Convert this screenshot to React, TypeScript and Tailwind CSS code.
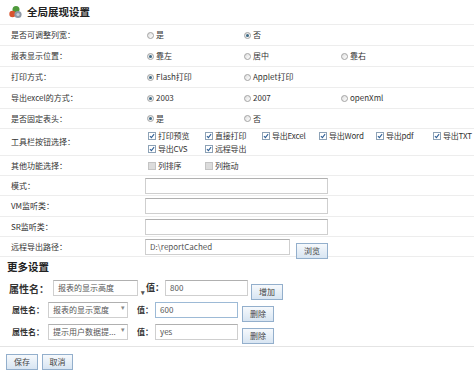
import React from "react";

const Radio = ({ checked }: { checked?: boolean }) => (
  <span className="relative inline-block w-[7px] h-[7px] shrink-0 rounded-full border border-[#a3a3a3] bg-linear-to-br from-[#dedede] to-white">
    {checked && <span className="absolute inset-[1px] rounded-full bg-[#3d6a86]" />}
  </span>
);

const Check = ({ checked }: { checked?: boolean }) => (
  <span
    className={
      "inline-flex items-center justify-center w-[8px] h-[8px] shrink-0 border " +
      (checked ? "border-[#8da2b6] bg-white" : "border-[#c4c4c4] bg-[#dcdcdc]")
    }
  >
    {checked && (
      <svg viewBox="0 0 8 8" className="w-[6px] h-[6px]">
        <path d="M1.2 4.2 L3.2 6.2 L6.8 1.5" stroke="#2f5f96" strokeWidth="1.4" fill="none" />
      </svg>
    )}
  </span>
);

const Btn = ({ children, w = "w-[32px]" }: { children: React.ReactNode; w?: string }) => (
  <button
    className={
      w +
      " h-[16px] shrink-0 border border-[#93afcc] bg-linear-to-b from-[#f6f9fc] to-[#d8e5f2] text-[8px] leading-none text-[#444]"
    }
  >
    {children}
  </button>
);

const Row = ({ label, h = "h-[21px]", children }: { label: string; h?: string; children: React.ReactNode }) => (
  <div className={"flex items-center border-b border-[#ededed] " + h}>
    <div className="w-[145px] shrink-0 pl-[11px] text-[8px] text-[#333]">{label}</div>
    <div className="flex items-center">{children}</div>
  </div>
);

const RadioOpt = ({ text, checked }: { text: string; checked?: boolean }) => (
  <div className="flex w-[97px] items-center gap-[2px] pl-[2px] text-[8px] text-[#333]">
    <Radio checked={checked} />
    <span>{text}</span>
  </div>
);

const CheckOpt = ({ text, checked }: { text: string; checked?: boolean }) => (
  <div className="flex w-[57px] items-center gap-[2px] pl-[3px] text-[8px] tracking-[-0.2px] text-[#333]">
    <Check checked={checked} />
    <span>{text}</span>
  </div>
);

const Input = ({ w, value, blue }: { w: string; value?: string; blue?: boolean }) => (
  <div
    className={
      w +
      " h-[16px] shrink-0 flex items-center pl-[4px] text-[8px] text-[#555] border " +
      (blue ? "border-[#9dbad6]" : "border-[#cfcfcf] border-t-[#b0b0b0]")
    }
  >
    {value}
  </div>
);

const HeaderIcon = () => (
  <svg width="15" height="14" viewBox="0 0 15 14">
    <circle cx="8" cy="4.5" r="3.5" fill="#4e9a3c" />
    <circle cx="4.5" cy="9" r="3.2" fill="#d8542f" />
    <circle cx="10" cy="9.5" r="3.6" fill="#8d98a6" />
    <circle cx="10" cy="9.5" r="1.6" fill="#c9d0d8" />
  </svg>
);

export default function App() {
  return (
    <div className="w-[474px] h-[374px] overflow-hidden bg-white font-['Noto_Sans_CJK_SC',sans-serif] text-[#333]">
      <div className="flex h-[25px] items-center gap-[4px] border-b border-[#ededed] pl-[8px]">
        <HeaderIcon />
        <span className="text-[10.5px] font-bold text-[#222]">全局展现设置</span>
      </div>
      <Row label="是否可调整列宽：">
        <RadioOpt text="是" />
        <RadioOpt text="否" checked />
      </Row>
      <Row label="报表显示位置：">
        <RadioOpt text="靠左" checked />
        <RadioOpt text="居中" />
        <RadioOpt text="靠右" />
      </Row>
      <Row label="打印方式：">
        <RadioOpt text="Flash打印" checked />
        <RadioOpt text="Applet打印" />
      </Row>
      <Row label="导出excel的方式：">
        <RadioOpt text="2003" checked />
        <RadioOpt text="2007" />
        <RadioOpt text="openXml" />
      </Row>
      <Row label="是否固定表头：" h="h-[20px]">
        <RadioOpt text="是" checked />
        <RadioOpt text="否" />
      </Row>
      <Row label="工具栏按钮选择：" h="h-[27px]">
        <div className="flex flex-col gap-[1px]">
          <div className="flex">
            <CheckOpt text="打印预览" checked />
            <CheckOpt text="直接打印" checked />
            <CheckOpt text="导出Excel" checked />
            <CheckOpt text="导出Word" checked />
            <CheckOpt text="导出pdf" checked />
            <CheckOpt text="导出TXT" checked />
          </div>
          <div className="flex">
            <CheckOpt text="导出CVS" checked />
            <CheckOpt text="远程导出" checked />
          </div>
        </div>
      </Row>
      <Row label="其他功能选择：" h="h-[20px]">
        <CheckOpt text="列排序" />
        <CheckOpt text="列拖动" />
      </Row>
      <Row label="模式：" h="h-[20px]">
        <Input w="w-[183px]" />
      </Row>
      <Row label="VM监听类：" h="h-[21px]">
        <Input w="w-[183px]" />
      </Row>
      <Row label="SR监听类：" h="h-[20px]">
        <Input w="w-[183px]" />
      </Row>
      <Row label="远程导出路径：" h="h-[20px]">
        <Input w="w-[145px]" value="D:\reportCached" />
        <div className="ml-[6px]">
          <Btn>浏览</Btn>
        </div>
      </Row>

      <div className="flex h-[20px] items-center pl-[7px] text-[10.5px] font-bold text-[#222]">更多设置</div>

      <div className="border-b border-[#e4e4e4] pb-[3px]">
        <div className="flex h-[22px] items-center">
          <span className="w-[53px] shrink-0 pl-[9px] text-[10px] font-bold">属性名：</span>
          <Input w="w-[85px]" value="报表的显示高度" />
          <span className="relative ml-[8px] w-[19px] shrink-0 text-[9px] font-bold">
            值：
            <span className="absolute left-[-5px] top-[6px] text-[7px] text-[#555]">▾</span>
          </span>
          <Input w="w-[83px]" value="800" />
          <div className="ml-[3px]">
            <Btn>增加</Btn>
          </div>
        </div>
        <div className="flex h-[22px] items-center">
          <span className="w-[48px] shrink-0 pl-[12px] text-[8px] font-bold">属性名：</span>
          <div className="relative">
            <Input w="w-[80px]" value="报表的显示宽度" />
            <span className="absolute right-[3px] top-[0px] text-[7px] text-[#888]">▾</span>
          </div>
          <span className="ml-[9px] w-[18px] shrink-0 text-[8px] font-bold">值：</span>
          <Input w="w-[83px]" value="600" blue />
          <div className="ml-[4px]">
            <Btn>删除</Btn>
          </div>
        </div>
        <div className="flex h-[22px] items-center">
          <span className="w-[48px] shrink-0 pl-[12px] text-[8px] font-bold">属性名：</span>
          <div className="relative">
            <Input w="w-[80px]" value="提示用户数据提..." />
            <span className="absolute right-[3px] top-[0px] text-[7px] text-[#888]">▾</span>
          </div>
          <span className="ml-[9px] w-[18px] shrink-0 text-[8px] font-bold">值：</span>
          <Input w="w-[83px]" value="yes" />
          <div className="ml-[4px]">
            <Btn>删除</Btn>
          </div>
        </div>
      </div>

      <div className="flex gap-[4px] pl-[6px] pt-[7px]">
        <Btn>保存</Btn>
        <Btn w="w-[31px]">取消</Btn>
      </div>
    </div>
  );
}
